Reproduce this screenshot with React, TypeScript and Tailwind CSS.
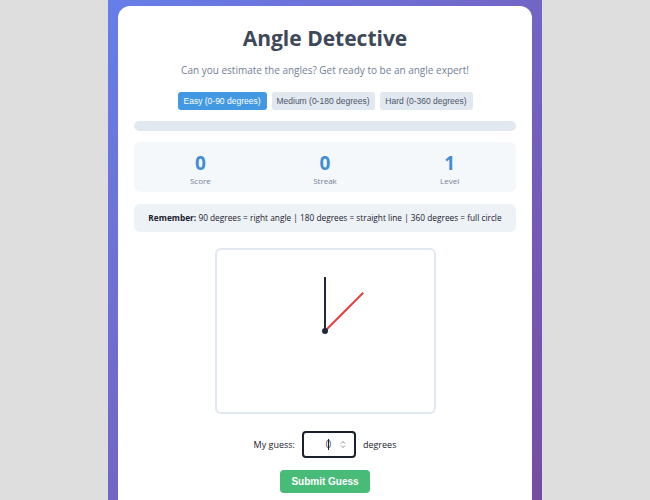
import { useState } from 'react';

type Level = 'easy' | 'medium' | 'hard';

const levels: { id: Level; label: string; width: string }[] = [
  { id: 'easy', label: 'Easy (0-90 degrees)', width: 'w-[89px]' },
  { id: 'medium', label: 'Medium (0-180 degrees)', width: 'w-[103px]' },
  { id: 'hard', label: 'Hard (0-360 degrees)', width: 'w-[93px]' },
];

function AngleCanvas({ angle }: { angle: number }) {
  // vertex sits in the middle of the drawing area, base arm points straight up
  const cx = 108;
  const cy = 81;
  const len = 54;
  const rad = ((90 - angle) * Math.PI) / 180;
  const x2 = cx + len * Math.cos(rad);
  const y2 = cy - len * Math.sin(rad);
  return (
    <svg width="217" height="162" viewBox="0 0 217 162" className="block">
      <line x1={cx} y1={cy} x2={cx} y2={cy - len} stroke="#1f2937" strokeWidth="2" />
      <line x1={cx} y1={cy} x2={x2} y2={y2} stroke="#e53e3e" strokeWidth="2" />
      <circle cx={cx} cy={cy} r="3" fill="#1f2937" />
    </svg>
  );
}

function Stat({ value, label }: { value: number; label: string }) {
  return (
    <div className="flex flex-col items-center">
      <span className="text-[19px] leading-[24px] font-bold text-[#3f8fd6]">{value}</span>
      <span className="text-[8px] leading-[12px] text-[#718096]">{label}</span>
    </div>
  );
}

export default function App() {
  const [level, setLevel] = useState<Level>('easy');
  const [score] = useState(0);
  const [streak] = useState(0);

  return (
    <div className="min-h-screen bg-[#dedede]">
      <div className="mx-auto w-[434px] min-h-screen bg-gradient-to-br from-[#667eea] to-[#764ba2] px-[10px] pt-[6px]">
        <div className="bg-white rounded-xl px-4 pt-[18px] pb-6 font-['Open_Sans',sans-serif]">
          <h1 className="text-center text-[21px] leading-[28px] font-bold text-[#3d4859]">
            Angle Detective
          </h1>
          <p className="mt-[10px] text-center text-[10px] leading-[16px] text-[#718096]">
            Can you estimate the angles? Get ready to be an angle expert!
          </p>

          <div className="mt-[14px] flex justify-center gap-[5px] font-['Liberation_Sans',Arial,sans-serif]">
            {levels.map((l) => (
              <button
                key={l.id}
                onClick={() => setLevel(l.id)}
                className={`${l.width} h-[18px] rounded-[3px] text-[8.5px] ${
                  level === l.id ? 'bg-[#4299e1] text-white' : 'bg-[#e2e8f0] text-[#4a5568]'
                }`}
              >
                {l.label}
              </button>
            ))}
          </div>

          <div className="mt-[11px] h-[10px] rounded-full bg-[#e2e8f0]" />

          <div className="mt-[11px] h-[50px] rounded-md bg-[#f5f8fb] grid grid-cols-3 items-start pt-[9px] px-1">
            <Stat value={score} label="Score" />
            <Stat value={streak} label="Streak" />
            <Stat value={1} label="Level" />
          </div>

          <div className="mt-[12px] h-[28px] rounded-md bg-[#edf2f7] flex items-center justify-center text-[8.3px] text-[#1a202c]">
            <span>
              <strong className="font-bold">Remember:</strong> 90 degrees = right angle | 180 degrees = straight
              line | 360 degrees = full circle
            </span>
          </div>

          <div className="mt-[16px] mx-auto w-[221px] h-[166px] border-2 border-[#e2e8f0] rounded-md bg-white">
            <AngleCanvas angle={45} />
          </div>

          <div className="mt-[17px] flex items-center justify-center gap-[7px] text-[9px] text-[#1a202c]">
            <span>My guess:</span>
            <div className="w-[54px] h-[27px] border-2 border-[#1a202c] rounded-[4px] flex items-center pl-[15px] pr-[8px]">
              <span className="flex-1 flex items-center justify-center text-[10px] text-[#4a5568]">
                0<span className="ml-[-3px] w-px h-[11px] bg-[#1a202c]" />
              </span>
              <svg width="6" height="9" viewBox="0 0 6 9" className="ml-1">
                <path d="M1 3.5 L3 1.5 L5 3.5" fill="none" stroke="#6b7280" strokeWidth="0.8" />
                <path d="M1 5.5 L3 7.5 L5 5.5" fill="none" stroke="#6b7280" strokeWidth="0.8" />
              </svg>
            </div>
            <span>degrees</span>
          </div>

          <div className="mt-[12px] flex justify-center">
            <button className="w-[90px] h-[23px] rounded-[4px] bg-[#48bb78] text-white font-bold text-[10px] font-['Liberation_Sans',Arial,sans-serif]">
              Submit Guess
            </button>
          </div>
        </div>
      </div>
    </div>
  );
}
